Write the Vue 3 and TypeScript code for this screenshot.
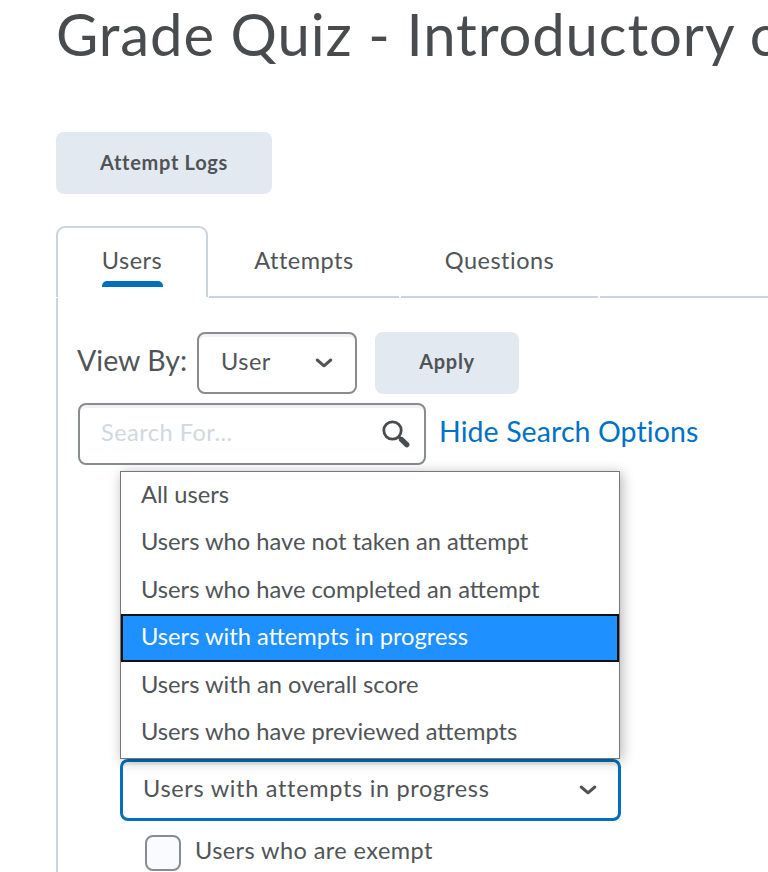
<script setup lang="ts">
import { ref } from 'vue'

interface Tab {
  id: string
  label: string
}

const tabs: Tab[] = [
  { id: 'users', label: 'Users' },
  { id: 'attempts', label: 'Attempts' },
  { id: 'questions', label: 'Questions' },
]
const activeTab = ref('users')

const filters: string[] = [
  'All users',
  'Users who have not taken an attempt',
  'Users who have completed an attempt',
  'Users with attempts in progress',
  'Users with an overall score',
  'Users who have previewed attempts',
]
const selected = ref('Users with attempts in progress')
</script>

<template>
  <main class="page">
    <h1 class="title">Grade Quiz - Introductory c</h1>
    <button class="button logs">Attempt Logs</button>

    <nav class="tabs">
      <button
        v-for="tab in tabs"
        :key="tab.id"
        class="tab"
        :class="[tab.id, { active: tab.id === activeTab }]"
        @click="activeTab = tab.id"
      >
        <span class="tab-label">{{ tab.label }}</span>
      </button>
      <span class="tab-rest"></span>
    </nav>

    <section class="panel">
      <div class="view-row">
        <span class="view-label">View By:</span>
        <div class="select view-select">
          <span class="view-value">User</span>
          <svg class="chevron" viewBox="0 0 18 12"><path d="M2.2 3 L9 8.8 L15.8 3" /></svg>
        </div>
        <button class="button apply">Apply</button>
      </div>

      <div class="search-row">
        <div class="search">
          <span class="placeholder">Search For...</span>
          <svg class="magnifier" viewBox="0 0 28 28">
            <circle cx="10.5" cy="10.5" r="8.7" />
            <path class="neck" d="M16.6 16.6 L20 20" />
            <path class="handle" d="M19.6 19.6 L24.8 24.6" />
          </svg>
        </div>
        <a class="link">Hide Search Options</a>
      </div>

      <div class="filter">
        <div class="select filter-select">
          <span class="filter-value">{{ selected }}</span>
          <svg class="chevron" viewBox="0 0 18 12"><path d="M2.2 3 L9 8.8 L15.8 3" /></svg>
        </div>
        <ul class="menu">
          <li
            v-for="option in filters"
            :key="option"
            class="option"
            :class="{ current: option === selected }"
            @click="selected = option"
          >{{ option }}</li>
        </ul>
      </div>

      <label class="exempt">
        <span class="checkbox"></span>
        <span class="exempt-label">Users who are exempt</span>
      </label>
    </section>
  </main>
</template>

<style>
body {
  margin: 0;
  background: #fff;
}
</style>

<style scoped>
.page {
  box-sizing: border-box;
  width: 768px;
  height: 872px;
  overflow: hidden;
  padding-left: 56px;
  display: flex;
  flex-direction: column;
  font-family: Lato, "Liberation Sans", sans-serif;
  color: #505456;
}
.title {
  margin: 0;
  height: 132px;
  line-height: 67px;
  font-size: 58px;
  font-weight: 400;
  letter-spacing: 0.88px;
  white-space: nowrap;
  color: #494c4e;
}
button {
  font: inherit;
  color: inherit;
  border: 0;
  padding: 0;
  background: none;
}
.button {
  flex: none;
  height: 62px;
  border-radius: 8px;
  background: #e3e9f1;
  font-size: 20px;
  font-weight: 700;
  letter-spacing: 0.7px;
  padding-bottom: 2px;
}
.logs {
  width: 216px;
}
.tabs {
  flex: none;
  display: flex;
  height: 72px;
  margin-top: 32px;
}
.tab {
  box-sizing: border-box;
  border-bottom: 2px solid #cdd5dc;
  margin-right: 2px;
  font-size: 23.5px;
  letter-spacing: 0.5px;
  line-height: 30px;
  display: flex;
  justify-content: center;
  padding-top: 19px;
}
.tab.active {
  width: 152px;
  margin-right: 1px;
  border: 2px solid #cdd5dc;
  border-bottom: 0;
  border-radius: 9px 9px 0 0;
  height: 71px;
  padding-top: 17px;
}
.tab.active .tab-label::after {
  content: "";
  display: block;
  height: 6px;
  width: 61px;
  margin-top: 6px;
  background: #006fbf;
  border-radius: 5px 5px 0 0;
}
.attempts {
  width: 190px;
}
.questions {
  width: 197px;
}
.tab-rest {
  flex: 1;
  border-bottom: 2px solid #cdd5dc;
}
.panel {
  flex: 1;
  border-left: 2px solid #cdd5dc;
  padding: 34px 0 0 19px;
}
.view-row,
.search-row {
  display: flex;
  align-items: center;
}
.view-label {
  width: 120px;
  font-size: 28.5px;
  line-height: 34px;
  white-space: nowrap;
  padding-bottom: 6px;
}
.select,
.search {
  box-sizing: border-box;
  height: 62px;
  display: flex;
  align-items: center;
  justify-content: space-between;
  border: 2px solid #868c8f;
  border-radius: 8px;
  box-shadow: inset 0 3px 0 #f2f2f4;
  font-size: 23.5px;
}
.view-select {
  width: 160px;
  padding: 0 22px 0 22px;
}
.view-value,
.placeholder,
.filter-value {
  padding-bottom: 5px;
  letter-spacing: 0.5px;
}
.chevron {
  width: 18px;
  height: 12px;
  fill: none;
  stroke: #505456;
  stroke-width: 3;
  stroke-linecap: round;
  stroke-linejoin: round;
}
.apply {
  width: 144px;
  margin-left: 18px;
  padding-bottom: 4px;
}
.search-row {
  margin-top: 9px;
}
.search {
  width: 348px;
  margin-left: 1px;
  padding: 0 14px 0 21px;
}
.placeholder {
  color: #d0d8e0;
}
.magnifier {
  width: 28px;
  height: 28px;
  fill: none;
  stroke: #494c4e;
  stroke-width: 2.8;
}
.magnifier .neck {
  stroke-width: 3;
}
.magnifier .handle {
  stroke-width: 5.4;
  stroke-linecap: round;
}
.link {
  margin-left: 13px;
  padding-bottom: 7px;
  color: #0072c6;
  font-size: 28.5px;
  letter-spacing: 0.09px;
  white-space: nowrap;
}
.filter {
  position: relative;
  width: 501px;
  margin: 294px 0 0 43px;
}
.filter-select {
  border: 3px solid #006fbf;
  padding: 0 21px 0 20px;
}
.filter-value {
  letter-spacing: 0.69px;
}
.menu {
  position: absolute;
  left: 0;
  bottom: 62px;
  box-sizing: border-box;
  width: 500px;
  height: 288px;
  margin: 0;
  padding: 0;
  list-style: none;
  background: #fff;
  border: 1px solid #767676;
  box-shadow: 2px 2px 12px rgba(0, 0, 0, 0.3);
}
.option {
  box-sizing: border-box;
  height: 47.4px;
  line-height: 44px;
  padding-left: 20px;
  font-size: 23.7px;
  white-space: nowrap;
}
.option.current {
  color: #fff;
  background: #1e90ff;
  border: 2px solid #101010;
  padding-left: 18px;
  line-height: 40px;
}
.exempt {
  display: flex;
  margin: 14px 0 0 68px;
}
.checkbox {
  box-sizing: border-box;
  width: 36px;
  height: 36px;
  border: 2px solid #868c8f;
  border-radius: 8px;
  background: #f9fbff;
}
.exempt-label {
  margin-left: 14px;
  font-size: 23.5px;
  line-height: 31px;
  letter-spacing: 0.43px;
}
</style>
